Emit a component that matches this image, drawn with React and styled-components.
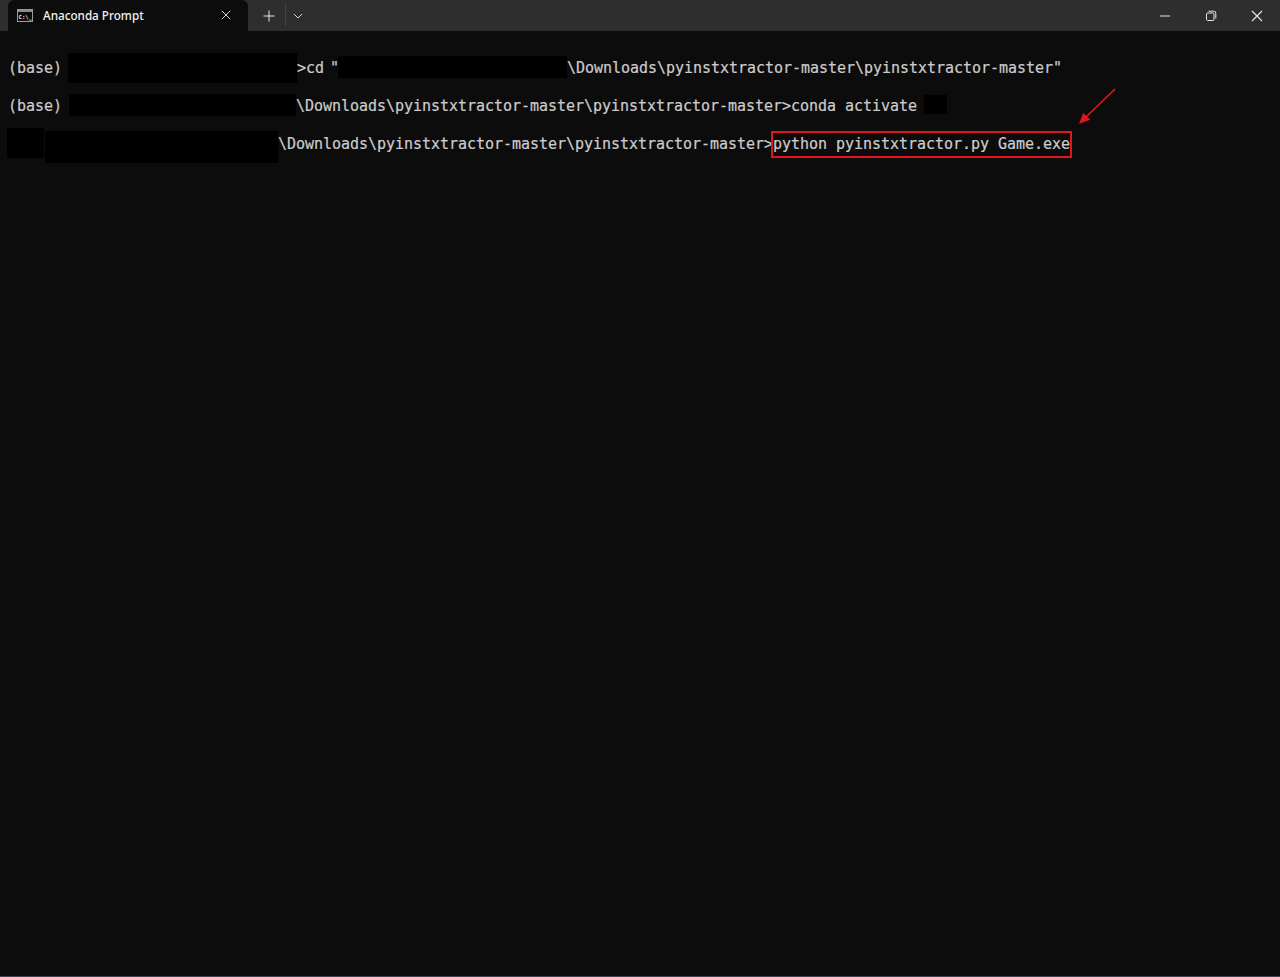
import React from "react";
import styled, { createGlobalStyle } from "styled-components";

const GlobalStyle = createGlobalStyle`
  html, body {
    margin: 0;
    padding: 0;
    background: #0c0c0c;
  }
`;

function Minimize() {
  return (
    <svg width="12" height="12" viewBox="0 0 12 12">
      <path d="M1 6h10" stroke="#e8e8e8" strokeWidth="1" fill="none" />
    </svg>
  );
}

function Restore() {
  return (
    <svg width="12" height="12" viewBox="0 0 12 12" fill="none" stroke="#e8e8e8" strokeWidth="1">
      <rect x="1.5" y="3" width="7.5" height="7.5" rx="1.2" />
      <path d="M3.5 1.2h5.3a2 2 0 0 1 2 2v5.3" />
    </svg>
  );
}

function CloseIcon({ size = 12, color = "#e8e8e8" }) {
  return (
    <svg width={size} height={size} viewBox="0 0 12 12">
      <path d="M1 1l10 10M11 1L1 11" stroke={color} strokeWidth="1.1" fill="none" />
    </svg>
  );
}

function CmdIcon() {
  return (
    <svg width="16" height="13" viewBox="0 0 16 13">
      <rect x="0.5" y="0.5" width="15" height="12" fill="#0c0c0c" stroke="#9a9a9a" />
      <rect x="1" y="1" width="14" height="2" fill="#8c8c8c" />
      <text x="1.6" y="9.6" fontFamily="'DejaVu Sans Mono', monospace" fontSize="5.6" fontWeight="700" fill="#e4e4e4">
        C:\_
      </text>
    </svg>
  );
}

function RedArrow() {
  return (
    <svg width="40" height="40" viewBox="0 0 40 40">
      <path d="M38 2L8 31" stroke="#e0161b" strokeWidth="1.7" fill="none" />
      <path d="M2 37l4.2-11.2 7 7z" fill="#e0161b" />
    </svg>
  );
}

export default function App() {
  return (
    <Window>
      <GlobalStyle />
      <TitleBar>
        <Tab>
          <CmdIcon />
          <TabTitle>Anaconda Prompt</TabTitle>
          <TabClose>
            <CloseIcon size={10} />
          </TabClose>
        </Tab>
        <NewTab>
          <svg width="12" height="12" viewBox="0 0 12 12">
            <path d="M6 .5v11M.5 6h11" stroke="#e4e4e4" strokeWidth="1" fill="none" />
          </svg>
        </NewTab>
        <TabDivider />
        <TabMenu>
          <svg width="10" height="6" viewBox="0 0 10 6">
            <path d="M1 1l4 4 4-4" stroke="#d8d8d8" strokeWidth="1" fill="none" />
          </svg>
        </TabMenu>
        <Controls>
          <ControlButton>
            <Minimize />
          </ControlButton>
          <ControlButton>
            <Restore />
          </ControlButton>
          <ControlButton>
            <CloseIcon />
          </ControlButton>
        </Controls>
      </TitleBar>
      <Terminal>
        <Line>
          <span>(base)&nbsp;</span>
          <Redact $w={229} $h={30} $left={-3} />
          <span>&gt;cd </span>
          <Quote>"</Quote>
          <Redact $w={229} $h={22} $left={-1} $shift={-2} />
          <span>\Downloads\pyinstxtractor-master\pyinstxtractor-master"</span>
        </Line>
        <Line>
          <span>(base)&nbsp;</span>
          <Redact $w={227} $h={22} $left={-2} $shift={-2} />
          <span>\Downloads\pyinstxtractor-master\pyinstxtractor-master&gt;conda activate</span>
          <Redact $w={23} $h={19} $left={7} $shift={-3} />
        </Line>
        <Line>
          <Redact $w={37} $h={30} $left={-1} $shift={-3} />
          <Redact $w={233} $h={32} $left={1} $shift={5} />
          <span>\Downloads\pyinstxtractor-master\pyinstxtractor-master&gt;</span>
          <Highlight>python pyinstxtractor.py Game.exe</Highlight>
          <ArrowWrap>
            <RedArrow />
          </ArrowWrap>
        </Line>
      </Terminal>
    </Window>
  );
}

const Window = styled.div`
  width: 1280px;
  height: 977px;
  display: flex;
  flex-direction: column;
  overflow: hidden;
  background: #0c0c0c;
  border-bottom: 1px solid #3e4656;
  box-sizing: border-box;
`;

const TitleBar = styled.div`
  height: 31px;
  flex-shrink: 0;
  display: flex;
  align-items: flex-end;
  padding-left: 8px;
  background: #2e2e2e;
`;

const Tab = styled.div`
  position: relative;
  width: 240px;
  height: 31px;
  box-sizing: border-box;
  display: flex;
  align-items: center;
  padding-left: 9px;
  background: #0c0c0c;
  border-radius: 6px 6px 0 0;
`;

const TabTitle = styled.span`
  margin-left: 10px;
  margin-top: -2px;
  font-family: "Noto Sans", "Open Sans", sans-serif;
  font-size: 11.7px;
  font-weight: 500;
  color: #f2f2f2;
`;

const TabClose = styled.div`
  margin-left: auto;
  margin-right: 17px;
  margin-top: -2px;
  display: flex;
`;

const NewTab = styled.div`
  width: 37px;
  height: 31px;
  box-sizing: border-box;
  padding-left: 5px;
  display: flex;
  align-items: center;
  justify-content: center;
  margin-top: -1px;
`;

const TabDivider = styled.div`
  width: 1px;
  height: 22px;
  margin-bottom: 5px;
  background: #444;
`;

const TabMenu = styled.div`
  width: 24px;
  height: 31px;
  display: flex;
  align-items: center;
  justify-content: center;
`;

const Controls = styled.div`
  margin-left: auto;
  height: 31px;
  display: flex;
`;

const ControlButton = styled.div`
  width: 46px;
  height: 31px;
  display: flex;
  align-items: center;
  justify-content: center;
`;

const Terminal = styled.div`
  flex: 1;
  display: flex;
  flex-direction: column;
  padding: 18px 0 0 8px;
  font-family: "DejaVu Sans Mono", "Liberation Mono", monospace;
  font-size: 15px;
  letter-spacing: -0.03px;
  color: #cccccc;
  -webkit-text-stroke: 0.2px #cccccc;
`;

const Line = styled.div`
  height: 38px;
  display: flex;
  align-items: center;
  white-space: pre;
`;

const Quote = styled.span`
  margin-left: -3px;
`;

const Redact = styled.div`
  flex-shrink: 0;
  width: ${(p) => p.$w}px;
  height: ${(p) => p.$h}px;
  margin-left: ${(p) => p.$left || 0}px;
  margin-top: ${(p) => p.$shift || 0}px;
  background: #000;
`;

const Highlight = styled.span`
  position: relative;

  &::after {
    content: "";
    position: absolute;
    left: -2px;
    right: -2px;
    top: -4px;
    bottom: -5px;
    border: 2px solid #e0161b;
  }
`;

const ArrowWrap = styled.div`
  position: relative;
  width: 0;
  height: 0;

  svg {
    position: absolute;
    left: 7px;
    top: -57px;
  }
`;
